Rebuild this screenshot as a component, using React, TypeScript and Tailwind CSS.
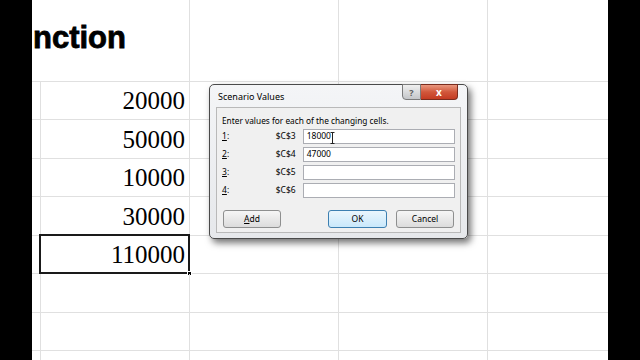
import React from "react";

const rowHeights = ["h-[38px]", "h-[39px]", "h-[38px]", "h-[39px]", "h-[38px]", "h-[39px]", "h-[38px]", "h-[39px]"];
const values = ["20000", "50000", "10000", "30000", "110000", "", "", ""];

const scenarioRows = [
     { key: "1", cell: "$C$3", value: "18000", caret: true },
     { key: "2", cell: "$C$4", value: "47000", caret: false },
     { key: "3", cell: "$C$5", value: "", caret: false },
     { key: "4", cell: "$C$6", value: "", caret: false },
];

const ui = '"Noto Sans", "Open Sans", sans-serif';

function Sheet() {
     return (
          <div className="w-[576px] h-[360px] overflow-hidden bg-white">
               {/* title row */}
               <div className="flex h-[82px]">
                    <div className="w-[158px] h-full border-r border-b border-[#e0e0e0] pt-[22px] pl-[1px]">
                         <span
                              className="block text-[31px] leading-none font-bold text-black [-webkit-text-stroke:0.8px_black]"
                              style={{ fontFamily: '"Liberation Sans", Arial, sans-serif' }}
                         >
                              nction
                         </span>
                    </div>
                    <div className="w-[149px] h-full border-r border-b border-[#e0e0e0]" />
                    <div className="w-[149px] h-full border-r border-b border-[#e0e0e0]" />
                    <div className="flex-1 h-full border-b border-[#e0e0e0]" />
               </div>
               {values.map((v, i) => (
                    <div key={`row_${i}`} className={`flex ${rowHeights[i]}`}>
                         <div className="w-[9px] h-full border-r border-b border-[#e0e0e0]" />
                         <div className="relative w-[149px] h-full border-r border-b border-[#e0e0e0] flex items-center justify-end pr-[4px]">
                              <span
                                   className="text-[25px] leading-none text-black"
                                   style={{ fontFamily: '"Liberation Serif", "Times New Roman", serif' }}
                              >
                                   {v}
                              </span>
                              {v === "110000" && (
                                   <>
                                        <div className="absolute left-[-2px] top-[-2px] right-[-1px] bottom-[-1px] border-2 border-[#1a1a1a]" />
                                        <div className="absolute right-[-3px] bottom-[-3px] w-[5px] h-[5px] bg-black border border-white" />
                                   </>
                              )}
                         </div>
                         <div className="w-[149px] h-full border-r border-b border-[#e0e0e0]" />
                         <div className="w-[149px] h-full border-r border-b border-[#e0e0e0]" />
                         <div className="flex-1 h-full border-b border-[#e0e0e0]" />
                    </div>
               ))}
          </div>
     );
}

function DialogButton({ label, accel, primary }: { label: string; accel?: boolean; primary?: boolean }) {
     return (
          <button
               className={`h-[18px] rounded-[3px] border text-[8.5px] leading-none text-black ${
                    primary
                         ? "border-[#3c7fb1] bg-gradient-to-b from-[#eaf6fd] to-[#c9e8fb]"
                         : "border-[#8e8f8f] bg-gradient-to-b from-[#f6f6f6] to-[#dcdcdc]"
               } ${label === "OK" ? "w-[59px]" : "w-[58px]"}`}
               style={{ fontFamily: ui }}
          >
               {accel ? (
                    <>
                         <span className="underline">{label[0]}</span>
                         {label.slice(1)}
                    </>
               ) : (
                    label
               )}
          </button>
     );
}

function ScenarioDialog() {
     return (
          <div className="absolute left-[209px] top-[84px] w-[259px] h-[155px] rounded-[5px] border border-[#4a4a4a] bg-gradient-to-b from-[#f4f5f7] to-[#e6e8eb] px-[6px] pb-[5px] flex flex-col shadow-[3px_4px_7px_rgba(0,0,0,0.55)]">
               <div className="h-[22px] flex items-start justify-between">
                    <span className="mt-[7px] pl-[2px] text-[9px] leading-none text-black" style={{ fontFamily: ui }}>
                         Scenario Values
                    </span>
                    <div className="flex -mt-px mr-[3px]">
                         <div className="w-[19px] h-[16px] rounded-bl-[4px] border border-[#7b7b7b] bg-gradient-to-b from-[#f0f0f0] to-[#c4c6c9] flex items-center justify-center">
                              <span className="text-[9px] leading-none font-bold text-[#5c5c5c]" style={{ fontFamily: ui }}>
                                   ?
                              </span>
                         </div>
                         <div className="w-[37px] h-[16px] rounded-br-[4px] border border-l-0 border-[#7a2c1e] bg-gradient-to-b from-[#e9977f] via-[#d1573b] to-[#c43b22] flex items-center justify-center">
                              <span className="text-[10px] leading-none font-bold text-white" style={{ fontFamily: ui }}>
                                   x
                              </span>
                         </div>
                    </div>
               </div>
               <div className="flex-1 border border-[#b9b9b9] bg-[#f0f0f0] pt-[8px] pl-[5px] pr-[5px] flex flex-col" style={{ fontFamily: ui }}>
                    <p className="h-[10px] text-[8.3px] leading-[10px] text-black whitespace-nowrap">
                         Enter values for each of the changing cells.
                    </p>
                    <div className="mt-[3px] flex flex-col gap-[3px]">
                         {scenarioRows.map((row) => (
                              <div key={`sc_${row.key}`} className="flex items-center h-[15px]">
                                   <span className="w-[40px] text-[8.5px] leading-none text-black">
                                        <span className="underline">{row.key}</span>:
                                   </span>
                                   <span className="w-[34px] text-right text-[8.5px] leading-none text-black">{row.cell}</span>
                                   <div className="ml-[7px] w-[153px] h-[15px] border border-[#abadb3] bg-white flex items-center pl-[3px]">
                                        <span className="text-[8.5px] leading-none text-black">{row.value}</span>
                                        {row.caret && (
                                             <svg width="5" height="12" viewBox="0 0 5 12" className="-ml-[1px] mt-[3px]">
                                                  <path d="M0.5 0.5h4M2.5 0.5v11M0.5 11.5h4" stroke="#222" strokeWidth="1" fill="none" />
                                             </svg>
                                        )}
                                   </div>
                              </div>
                         ))}
                    </div>
                    <div className="mt-[12px] flex items-center pl-[1px] pr-[1px]">
                         <DialogButton label="Add" accel />
                         <div className="ml-auto flex gap-[9px]">
                              <DialogButton label="OK" primary />
                              <DialogButton label="Cancel" />
                         </div>
                    </div>
               </div>
          </div>
     );
}

export default function App() {
     return (
          <div className="relative w-[640px] h-[360px] flex bg-black overflow-hidden">
               <div className="w-[32px] h-full bg-black" />
               <Sheet />
               <div className="w-[32px] h-full bg-black" />
               <ScenarioDialog />
          </div>
     );
}
